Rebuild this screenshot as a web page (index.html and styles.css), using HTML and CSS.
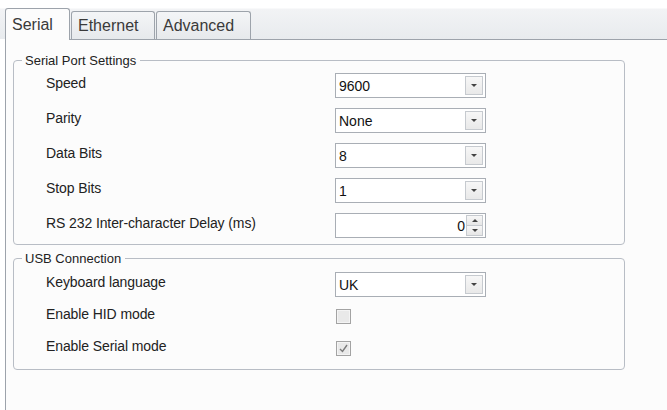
FILE: index.html
```html
<!DOCTYPE html>
<html>
<head>
<meta charset="utf-8">
<link rel="stylesheet" href="styles.css">
</head>
<body>
<div class="window">
  <div class="tabstrip">
    <div class="tab active">Serial</div>
    <div class="tab tab-eth">Ethernet</div>
    <div class="tab tab-adv">Advanced</div>
  </div>
  <div class="panel">
    <fieldset class="group group-serial">
      <legend>Serial Port Settings</legend>
      <div class="row"><span class="label">Speed</span><div class="combo"><span class="val">9600</span><span class="drop"><i class="arrow"></i></span></div></div>
      <div class="row"><span class="label">Parity</span><div class="combo"><span class="val">None</span><span class="drop"><i class="arrow"></i></span></div></div>
      <div class="row"><span class="label">Data Bits</span><div class="combo"><span class="val">8</span><span class="drop"><i class="arrow"></i></span></div></div>
      <div class="row"><span class="label">Stop Bits</span><div class="combo"><span class="val">1</span><span class="drop"><i class="arrow"></i></span></div></div>
      <div class="row"><span class="label">RS 232 Inter-character Delay (ms)</span><div class="combo spin"><span class="val num">0</span><span class="spinbtns"><span class="sb"><i class="arrow up"></i></span><span class="sb"><i class="arrow"></i></span></span></div></div>
    </fieldset>
    <fieldset class="group group-usb">
      <legend>USB Connection</legend>
      <div class="row"><span class="label">Keyboard language</span><div class="combo"><span class="val">UK</span><span class="drop"><i class="arrow"></i></span></div></div>
      <div class="row short first"><span class="label">Enable HID mode</span><span class="check"></span></div>
      <div class="row short"><span class="label">Enable Serial mode</span><span class="check checked"><svg width="9" height="9" viewBox="0 0 9 9"><path d="M1 5 L3.5 7.5 L8 1" fill="none" stroke="#7a7a7a" stroke-width="1.4"/></svg></span></div>
    </fieldset>
  </div>
</div>
</body>
</html>
```
FILE: styles.css
```css
html, body {
  margin: 0;
  padding: 0;
  background: #ffffff;
}
body {
  width: 667px;
  height: 410px;
  overflow: hidden;
  font-family: "Liberation Sans", Arial, sans-serif;
  color: #222;
}
.window {
  display: flex;
  flex-direction: column;
  height: 410px;
}
.tabstrip {
  height: 39px;
  display: flex;
  align-items: flex-end;
  padding-left: 5px;
  gap: 1px;
  background: linear-gradient(to bottom, #ffffff 0, #ffffff 8px, #f2f3f5 9px, #e8ebee 39px);
  flex: none;
}
.tab {
  box-sizing: border-box;
  height: 28px;
  padding: 5px 0 0 6px;
  font-size: 16px;
  color: #3a3a3a;
  border: 1px solid #9da3ab;
  border-bottom: none;
  border-radius: 3px 3px 0 0;
  background: linear-gradient(to bottom, #f4f5f7, #e6e9ec);
}
.tab.active {
  height: 32px;
  width: 65px;
  margin-bottom: -1px;
  padding-top: 7px;
  background: #fcfcfc;
  position: relative;
  z-index: 1;
}
.tab-eth { width: 84px; }
.tab-adv { width: 95px; }
.panel {
  flex: 1;
  margin-left: 5px;
  border-left: 1px solid #9da3ab;
  border-top: 1px solid #9da3ab;
  background: #fcfcfc;
  padding: 13px 0 0 7px;
}
.group {
  box-sizing: border-box;
  width: 612px;
  margin: 0;
  border: 1px solid #b8bdc5;
  border-radius: 4px;
  padding: 0 0 0 32px;
}
.group legend {
  font-size: 13px;
  color: #222;
  padding: 0 4px 0 3px;
  margin-left: -24px;
}
.group-serial {
  height: 192px;
  padding-top: 5px;
  display: flex;
  flex-direction: column;
  gap: 10px;
}
.group-usb {
  margin-top: 6px;
  height: 119px;
  padding-top: 6px;
}
.row {
  display: flex;
  align-items: center;
  height: 25px;
}
.group-usb .row.short {
  height: 15px;
  margin-top: 17px;
}
.group-usb .row.short.first {
  margin-top: 12px;
}
.label {
  width: 289px;
  font-size: 14px;
  letter-spacing: -0.1px;
  color: #222;
  position: relative;
  top: -3px;
}
.combo {
  box-sizing: border-box;
  width: 151px;
  height: 25px;
  border: 1px solid #a9aeb5;
  background: #fff;
  display: flex;
  align-items: center;
  padding: 0 2px 0 3px;
  font-size: 14px;
  color: #111;
}
.combo .val { flex: 1; }
.combo .val.num { text-align: right; padding-right: 1px; }
.drop {
  box-sizing: border-box;
  width: 18px;
  height: 19px;
  border: 1px solid #c6cacf;
  background: linear-gradient(to bottom, #f7f7f7, #e9e9e9);
  display: flex;
  align-items: center;
  justify-content: center;
}
.arrow {
  width: 0;
  height: 0;
  border-left: 3px solid transparent;
  border-right: 3px solid transparent;
  border-top: 3px solid #444;
}
.arrow.up {
  border-top: none;
  border-bottom: 3px solid #444;
}
.spinbtns {
  display: flex;
  flex-direction: column;
  width: 17px;
  height: 21px;
  border: 1px solid #c6cacf;
  box-sizing: border-box;
}
.sb {
  flex: 1;
  display: flex;
  align-items: center;
  justify-content: center;
  background: linear-gradient(to bottom, #f7f7f7, #e6e6e6);
}
.sb + .sb { border-top: 1px solid #c6cacf; }
.check {
  box-sizing: border-box;
  width: 15px;
  height: 15px;
  border: 1px solid #a3a3a3;
  background: #e9e9e9;
  box-shadow: inset 0 0 0 1px #f4f4f4;
  display: flex;
  align-items: center;
  justify-content: center;
  margin-left: 1px;
}
```
